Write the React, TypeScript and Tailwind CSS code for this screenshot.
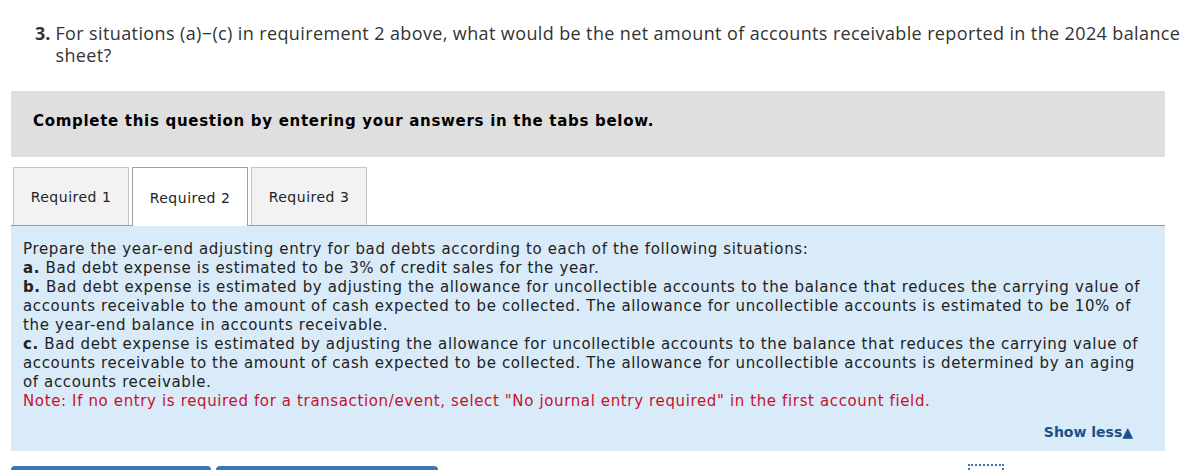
const body = { fontFamily: '"DejaVu Sans", Verdana, sans-serif' };

const tabs = ["Required 1", "Required 2", "Required 3"];

export default function App() {
  const active = 1;

  return (
    <div className="w-[1192px] h-[470px] overflow-hidden bg-white">
      {/* Question */}
      <div
        className="flex pl-[35px] pt-[22px] text-[18px] leading-[22px] text-[#333] whitespace-nowrap"
        style={{ fontFamily: '"Open Sans", Lato, sans-serif' }}
      >
        <span className="font-bold mr-[5px]">3.</span>
        <span className="tracking-[0.38px]">
          For situations (a)−(c) in requirement 2 above, what would be the net amount of accounts receivable reported in the 2024 balance
          <br />
          sheet?
        </span>
      </div>

      <div className="ml-[11px] w-[1154px] mt-[25px] tracking-[0.63px]" style={body}>
        {/* Instruction bar */}
        <div className="h-[66px] bg-[#dfdfdf] pl-[22px] pt-[18px]">
          <span className="text-[15px] leading-[18px] font-bold text-black tracking-[0.7px]">
            Complete this question by entering your answers in the tabs below.
          </span>
        </div>

        {/* Tabs */}
        <div className="mt-[10px] flex items-end gap-[3px] pl-[2px] border-b border-[#9a9a9a] h-[59px]">
          {tabs.map((t, i) => (
            <div
              key={t}
              className={`w-[116px] flex items-center justify-center pt-[2px] text-[14px] tracking-[0.5px] text-[#222] border border-b-0 ${
                i === active
                  ? "bg-white border-[#a0a0a0] -mb-px h-[59px]"
                  : "bg-[#f2f2f2] border-[#c6c6c6] h-[58px]"
              }`}
            >
              {t}
            </div>
          ))}
        </div>

        {/* Content */}
        <div className="bg-[#d9ebf9] pl-[12px] pr-[4px] pt-[14px] pb-[9px] text-[15px] leading-[19px] text-[#222] whitespace-nowrap">
          <p>Prepare the year-end adjusting entry for bad debts according to each of the following situations:</p>
          <p>
            <b>a.</b> Bad debt expense is estimated to be 3% of credit sales for the year.
          </p>
          <p>
            <b>b.</b> Bad debt expense is estimated by adjusting the allowance for uncollectible accounts to the balance that reduces the carrying value of
            <br />
            accounts receivable to the amount of cash expected to be collected. The allowance for uncollectible accounts is estimated to be 10% of
            <br />
            the year-end balance in accounts receivable.
          </p>
          <p>
            <b>c.</b> Bad debt expense is estimated by adjusting the allowance for uncollectible accounts to the balance that reduces the carrying value of
            <br />
            accounts receivable to the amount of cash expected to be collected. The allowance for uncollectible accounts is determined by an aging
            <br />
            of accounts receivable.
          </p>
          <p className="text-[#c8102e]">
            Note: If no entry is required for a transaction/event, select "No journal entry required" in the first account field.
          </p>
          <div className="flex justify-end mt-[12px] pr-[28px]">
            <span className="text-[14px] tracking-normal font-bold text-[#1d4f88]">Show less▲</span>
          </div>
        </div>

        {/* Bottom buttons */}
        <div className="flex items-start mt-[15px]">
          <div className="w-[200px] h-[10px] bg-[#3b74b7] rounded-t-[4px]" />
          <div className="w-[222px] h-[10px] bg-[#3b74b7] rounded-t-[4px] ml-[5px]" />
          <div className="ml-[530px] -mt-[2px] w-[36px] h-[10px] border-2 border-dotted border-[#3b74b7]" />
        </div>
      </div>
    </div>
  );
}
